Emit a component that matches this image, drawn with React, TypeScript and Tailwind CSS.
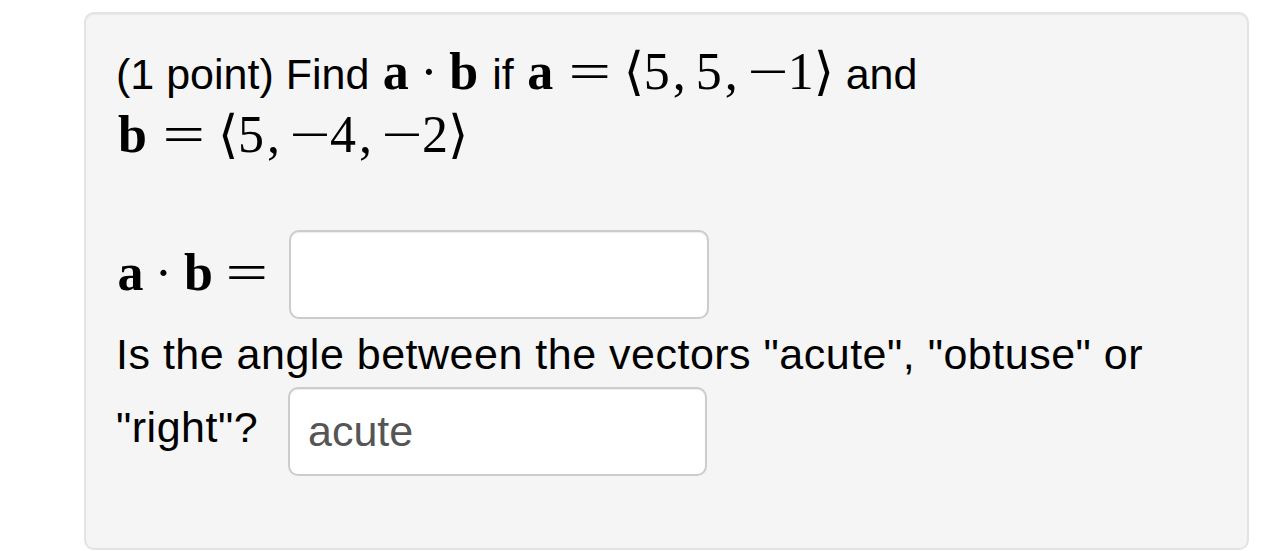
import React from "react";

const M = ({ children }: { children: React.ReactNode }) => (
  <span className="font-['Liberation_Serif','DejaVu_Serif',serif] text-[52px] leading-[0]">{children}</span>
);

const G = ({ w, b, children }: { w: string; b?: boolean; children: React.ReactNode }) => (
  <span className={`inline-block text-center ${w} ${b ? "font-bold" : ""}`}>{children}</span>
);

const Eq = ({ w }: { w: string }) => (
  <span className={`inline-block text-center ${w}`}>
    <span className="inline-block scale-x-[1.45]">=</span>
  </span>
);

const Minus = () => (
  <span className="inline-block text-center w-[40px]">
    <span className="inline-block scale-x-[1.4]">−</span>
  </span>
);

const Comma = () => (
  <span className="inline-block w-[26px] text-left pl-[3px]">,</span>
);

export default function App() {
  return (
    <div className="w-[1262px] h-[551px] bg-white pt-[12px] pl-[84px] font-['Liberation_Sans',Arial,sans-serif] text-black">
      <div className="w-[1165px] h-[538px] rounded-[10px] border-2 border-[#e3e3e3] bg-[#f5f5f5] shadow-[inset_0_1px_1px_rgba(0,0,0,0.05)] pl-[30px] pt-[29px] text-[43px]">
        <div className="leading-[63px] whitespace-nowrap">
          <span>(1 point) Find </span>
          <M>
            <G w="w-[29px]" b>a</G>
            <G w="w-[37px]">·</G>
            <G w="w-[33px]" b>b</G>
          </M>
          <span> if </span>
          <M>
            <G w="w-[29px]" b>a</G>
            <Eq w="w-[69px]" />
            <G w="w-[20px]">⟨</G>
            <G w="w-[26px]">5</G>
            <Comma />
            <G w="w-[26px]">5</G>
            <Comma />
            <Minus />
            <G w="w-[26px]">1</G>
            <G w="w-[20px]">⟩</G>
          </M>
          <span> and</span>
        </div>
        <div className="leading-[63px] whitespace-nowrap">
          <M>
            <G w="w-[33px]" b>b</G>
            <Eq w="w-[69px]" />
            <G w="w-[20px]">⟨</G>
            <G w="w-[26px]">5</G>
            <Comma />
            <Minus />
            <G w="w-[26px]">4</G>
            <Comma />
            <Minus />
            <G w="w-[26px]">2</G>
            <G w="w-[20px]">⟩</G>
          </M>
        </div>

        <div className="mt-[61px] flex items-center h-[89px]">
          <div className="w-[173px] leading-[60px] whitespace-nowrap">
            <M>
              <G w="w-[29px]" b>a</G>
              <G w="w-[37px]">·</G>
              <G w="w-[33px]" b>b</G>
              <Eq w="w-[64px]" />
            </M>
          </div>
          <input
            type="text"
            aria-label="a dot b"
            className="w-[420px] h-[89px] rounded-[10px] border-2 border-[#cccccc] bg-white shadow-[inset_0_1px_1px_rgba(0,0,0,0.075)] px-[18px] text-[43px] text-[#555555] outline-none"
          />
        </div>

        <div className="mt-[11px] leading-[48px] whitespace-nowrap tracking-[0.5px]">
          Is the angle between the vectors "acute", "obtuse" or
        </div>

        <div className="mt-[9px] flex items-center h-[89px]">
          <div className="w-[172px] leading-[48px] mb-[9px] whitespace-nowrap tracking-[0.5px]">"right"?</div>
          <input
            type="text"
            aria-label="angle type"
            defaultValue="acute"
            className="w-[419px] h-[89px] rounded-[10px] border-2 border-[#cccccc] bg-white shadow-[inset_0_1px_1px_rgba(0,0,0,0.075)] px-[18px] text-[43px] text-[#555555] outline-none"
          />
        </div>
      </div>
    </div>
  );
}
